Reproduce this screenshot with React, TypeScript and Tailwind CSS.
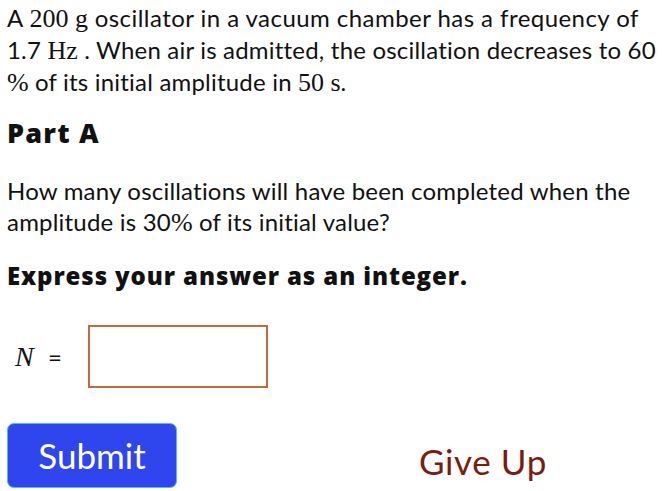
import React from "react";

const M = ({ children }: { children: React.ReactNode }) => (
  <span className="font-['Liberation_Serif',serif] text-[26px] tracking-normal">{children}</span>
);

export default function App() {
  return (
    <div className="w-[662px] h-[491px] bg-white text-[#111] font-['Lato','Open_Sans',sans-serif] overflow-hidden">
      <div className="px-[7px] pt-[2px]">
        <div className="text-[24px] leading-[31px] whitespace-nowrap tracking-[0.2px]">
          <div className="tracking-[0.45px]">
            A <M>200</M> <M>g</M> oscillator in a vacuum chamber has a frequency of
          </div>
          <div>
            1.7 <M>Hz</M> . When air is admitted, the oscillation decreases to 60
          </div>
          <div>
            <M>%</M> of its initial amplitude in <M>50</M> <M>s</M>.
          </div>
        </div>
        <h2 className="mt-[20px] text-[27px] leading-[30px] font-extrabold tracking-[1.2px] font-['Open_Sans',sans-serif]">Part A</h2>
        <div className="mt-[27px] text-[24px] leading-[31px] whitespace-nowrap tracking-[0.2px]">
          <div>How many oscillations will have been completed when the</div>
          <div>
            amplitude is 30<M>%</M> of its initial value?
          </div>
        </div>
        <p className="mt-[23px] text-[24px] leading-[30px] font-extrabold tracking-[0.9px] font-['Open_Sans',sans-serif] whitespace-nowrap">
          Express your answer as an integer.
        </p>
        <div className="mt-[34px] flex items-center h-[63px]">
          <span className="ml-[8px] w-[28px] font-['Liberation_Serif',serif] italic text-[28px] leading-none">N</span>
          <span className="ml-[5px] text-[24px] leading-none">=</span>
          <div className="ml-[26px] w-[180px] h-[63px] border-2 border-[#c06a3e]" />
        </div>
        <div className="mt-[35px] flex items-start">
          <button className="w-[170px] h-[65px] rounded-[7px] bg-[#2f45ee] border-[1.5px] border-[#55b4ff] text-white text-[35px] leading-none flex items-center justify-center">
            Submit
          </button>
          <span className="ml-[242px] mt-[17px] text-[35px] leading-[42px] tracking-[0.6px] text-[#7b1c10] whitespace-nowrap">Give Up</span>
        </div>
      </div>
    </div>
  );
}
